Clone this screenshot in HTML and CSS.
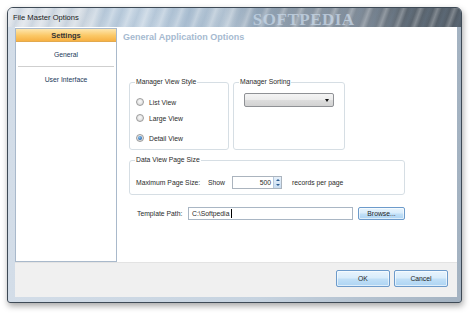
FILE: index.html
```html
<!DOCTYPE html>
<html>
<head>
<meta charset="utf-8">
<title>File Master Options</title>
<link rel="stylesheet" href="styles.css">
</head>
<body>
<div class="window">
  <div class="titlebar">
    <span class="title">File Master Options</span>
    <span class="watermark">SOFTPEDIA</span>
  </div>
  <div class="client">
    <div class="main">
      <nav class="sidebar">
        <div class="side-head">Settings</div>
        <div class="side-item sep">General</div>
        <div class="side-item">User Interface</div>
      </nav>
      <section class="content">
        <h1 class="heading">General Application Options</h1>
        <div class="groups">
          <fieldset class="group g-view">
            <legend>Manager View Style</legend>
            <div class="radios">
              <label class="radio r1"><span class="dot"></span>List View</label>
              <label class="radio r2"><span class="dot"></span>Large View</label>
              <label class="radio r3"><span class="dot on"></span>Detail View</label>
            </div>
          </fieldset>
          <fieldset class="group g-sort">
            <legend>Manager Sorting</legend>
            <div class="combo"><span class="arrow"></span></div>
          </fieldset>
        </div>
        <fieldset class="group g-page">
          <legend>Data View Page Size</legend>
          <div class="page-row">
            <span class="lbl-max">Maximum Page Size:</span>
            <span class="lbl-show">Show</span>
            <span class="num"><span class="num-val">500</span><span class="spin"><span class="up"></span><span class="down"></span></span></span>
            <span class="lbl-rec">records per page</span>
          </div>
        </fieldset>
        <div class="tpl-row">
          <span class="lbl-tpl">Template Path:</span>
          <span class="tpl-input">C:\Softpedia<span class="caret"></span></span>
          <span class="btn btn-browse">Browse...</span>
        </div>
      </section>
    </div>
    <div class="footer">
      <span class="btn btn-ok">OK</span>
      <span class="btn btn-cancel">Cancel</span>
    </div>
  </div>
</div>
</body>
</html>
```
FILE: styles.css
```css
* { box-sizing: border-box; margin: 0; padding: 0; }
html, body { width: 474px; height: 317px; overflow: hidden; background: #fff; }
body {
  font-family: "Liberation Sans", Arial, sans-serif;
  font-size: 6.8px;
  color: #2b2b2b;
}
.window {
  margin: 7px 0 0 7px;
  width: 455px;
  height: 296px;
  border: 1px solid #3e4a56;
  border-radius: 6px 6px 3px 3px;
  background: linear-gradient(to right, #d3dde8 0%, #c6d3e0 55%, #a3b2c1 100%);
  padding: 0 4px 5px 7px;
  box-shadow: 1px 3px 6px rgba(0,0,0,0.35);
  display: flex;
  flex-direction: column;
  overflow: hidden;
}
.titlebar {
  height: 19px;
  margin: 0 -4px 0 -7px;
  padding-left: 5px;
  display: flex;
  align-items: center;
  overflow: hidden;
  background:
    repeating-linear-gradient(110deg, rgba(255,255,255,0) 0px, rgba(255,255,255,0.25) 4px, rgba(255,255,255,0) 8px, rgba(120,150,180,0.15) 12px, rgba(255,255,255,0) 16px),
    linear-gradient(to right, #dfe4ea 0%, #d3dbe3 17%, #bccddd 22%, #c5d4e2 30%, #aec1d3 40%, #b9c8d6 48%, #94a6b8 55%, #8d9aa7 62%, #7f8a96 78%, #5c6670 88%, #535d67 100%);
}
.title {
  font-size: 7.6px;
  color: #1a1a1a;
}
.watermark {
  margin-left: 174px;
  font-family: "Liberation Serif", serif;
  font-weight: bold;
  font-size: 17px;
  letter-spacing: 0.5px;
  color: rgba(200, 216, 232, 0.75);
  line-height: 19px;
  padding-top: 3px;
}
.client {
  flex: 1;
  display: flex;
  flex-direction: column;
  background: #fff;
}
.main {
  flex: 1;
  display: flex;
}
.sidebar {
  width: 102px;
  margin-top: 1px;
  border: 1px solid #a9b9cb;
  background: #fff;
  display: flex;
  flex-direction: column;
  color: #23395a;
}
.side-head {
  height: 13px;
  line-height: 13px;
  text-align: center;
  font-weight: bold;
  font-size: 7.5px;
  color: #333;
  background: linear-gradient(#fde6ae, #fbc866 55%, #f7b143);
  border-bottom: 1px solid #e2a94e;
}
.side-item {
  height: 25px;
  line-height: 25px;
  text-align: center;
}
.side-item.sep {
  margin: 0 2px;
  border-bottom: 1px solid #cfcfcf;
}
.content {
  flex: 1;
  padding: 5px 0 0 6px;
}
.heading {
  font-size: 9px;
  line-height: 11px;
  font-weight: bold;
  color: #a6bad0;
}
.groups {
  display: flex;
  gap: 4px;
  margin: 35px 0 0 6px;
}
.group {
  border: 1px solid #d6dee4;
  border-radius: 3px;
  min-width: 0;
}
.group legend {
  line-height: 8px;
  padding: 0 1px;
  margin-left: 5px;
  color: #2b2b2b;
}
.g-view { width: 100px; height: 72px; }
.g-sort { width: 112px; height: 72px; }
.radios { padding: 11px 0 0 6px; }
.radio {
  display: flex;
  align-items: center;
  gap: 5px;
  height: 10px;
}
.r2 { margin-top: 6px; }
.r3 { margin-top: 10px; }
.dot {
  width: 8px;
  height: 8px;
  border-radius: 50%;
  border: 1px solid #9c9c9c;
  background: radial-gradient(circle at 50% 40%, #fbfbfb 0%, #e2e2e2 60%, #c9c9c9 100%);
  display: flex;
  align-items: center;
  justify-content: center;
}
.dot.on::after {
  content: "";
  width: 4px;
  height: 4px;
  border-radius: 50%;
  background: radial-gradient(circle at 40% 35%, #8cc6f2 0%, #2c6cb4 70%, #1c4e8c 100%);
}
.combo {
  margin: 7px 0 0 10px;
  width: 90px;
  height: 14px;
  border: 1px solid #8f9195;
  border-radius: 2px;
  background: linear-gradient(#f4f4f4 0%, #ebebeb 50%, #dddddd 51%, #d2d2d2 100%);
  display: flex;
  justify-content: flex-end;
  align-items: center;
  padding-right: 4px;
}
.arrow {
  width: 0;
  height: 0;
  border-left: 2.5px solid transparent;
  border-right: 2.5px solid transparent;
  border-top: 3px solid #111;
}
.g-page {
  margin: 6px 0 0 6px;
  width: 276px;
  height: 39px;
}
.page-row {
  display: flex;
  align-items: center;
  height: 13px;
  margin: 12px 0 0 6px;
}
.lbl-max { width: 72px; }
.lbl-show { width: 24px; }
.num {
  width: 50px;
  height: 13px;
  border: 1px solid #abb4be;
  background: #fff;
  display: flex;
  align-items: center;
  justify-content: flex-end;
}
.num-val { padding-right: 2px; }
.spin {
  width: 8px;
  height: 11px;
  display: flex;
  flex-direction: column;
  background: linear-gradient(#e6f0fa, #c8dcf0);
  border-left: 1px solid #b6c8dc;
}
.spin .up, .spin .down {
  flex: 1;
  display: flex;
  align-items: center;
  justify-content: center;
}
.spin .up::after {
  content: "";
  border-left: 2px solid transparent;
  border-right: 2px solid transparent;
  border-bottom: 2px solid #2d5d92;
}
.spin .down::after {
  content: "";
  border-left: 2px solid transparent;
  border-right: 2px solid transparent;
  border-top: 2px solid #2d5d92;
}
.lbl-rec { margin-left: 10px; }
.tpl-row {
  display: flex;
  align-items: center;
  margin: 12px 0 0 14px;
  height: 13px;
}
.lbl-tpl { width: 51px; }
.tpl-input {
  width: 165px;
  height: 13px;
  border: 1px solid #a9b6c4;
  background: #fff;
  padding-left: 3px;
  display: flex;
  align-items: center;
}
.caret {
  display: inline-block;
  width: 1px;
  height: 9px;
  background: #000;
  margin-left: 2px;
}
.btn {
  display: flex;
  align-items: center;
  justify-content: center;
  border: 1px solid #6d9bcb;
  border-radius: 2px;
  background: linear-gradient(#e8f4fd 0%, #d8ecfb 48%, #c2e0f7 52%, #add4f3 100%);
  color: #1f1f1f;
  box-shadow: inset 0 0 0 1px rgba(255,255,255,0.6);
}
.btn-browse {
  width: 47px;
  height: 13px;
  margin-left: 5px;
}
.footer {
  height: 35px;
  background: #f0f0f0;
  border-top: 1px solid #e3e3e3;
  display: flex;
  justify-content: flex-end;
  gap: 4px;
  padding: 7px 9px 0 0;
}
.btn-ok, .btn-cancel {
  width: 54px;
  height: 17px;
}
```
